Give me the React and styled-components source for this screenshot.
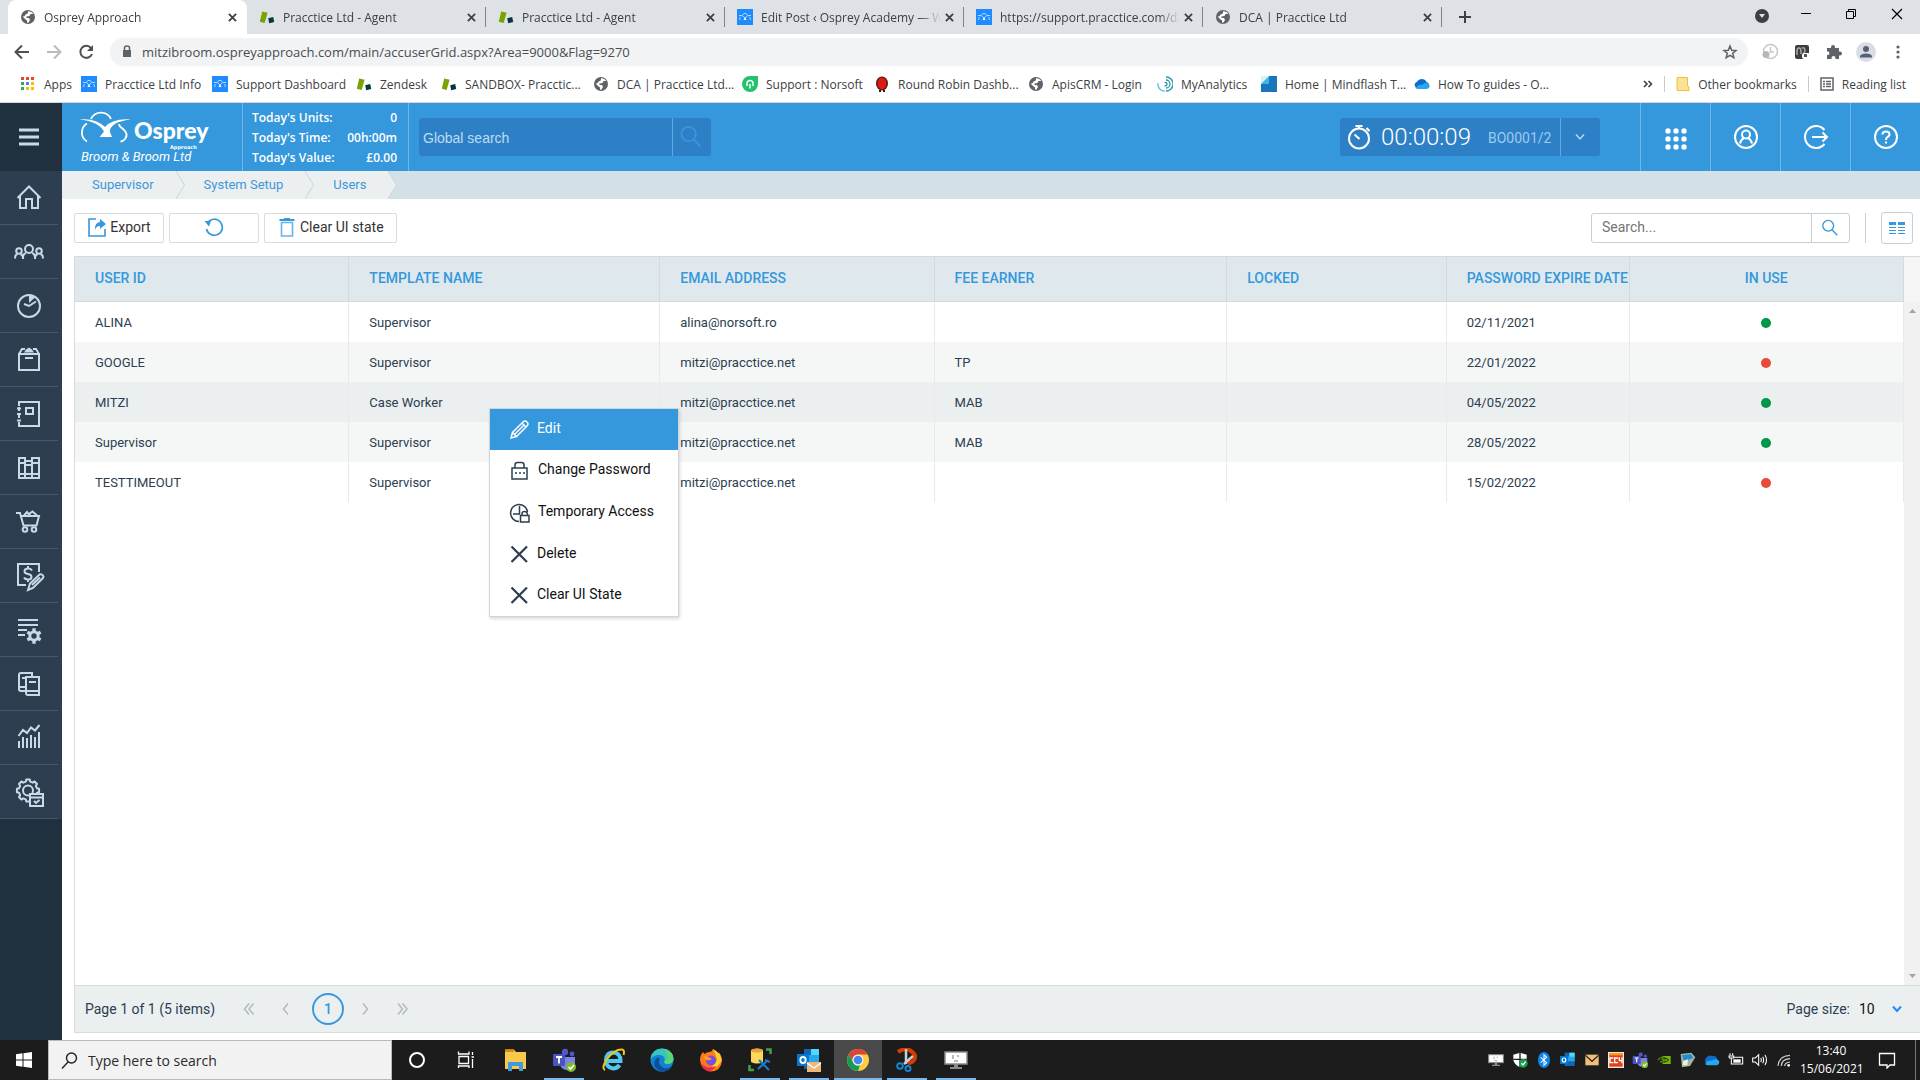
import React from "react";
import styled, { createGlobalStyle, css } from "styled-components";

const GlobalStyle = createGlobalStyle`
    * {
        box-sizing: border-box;
    }

    body {
        margin: 0;
        background-color: #fff;
        font-family: Roboto, "Liberation Sans", sans-serif;
        font-size: 14px;
        color: #2c3e50;
    }

    button,
    input,
    select {
        font: inherit;
        color: inherit;
        margin: 0;
        padding: 0;
        border: 0;
        border-radius: 0;
        background: none;
        outline: none;
    }

    button {
        cursor: pointer;
    }

    a {
        color: inherit;
        text-decoration: none;
    }

    ul,
    ol {
        list-style: none;
        margin: 0;
        padding: 0;
    }

    svg {
        display: block;
        flex: none;
    }
`;

const Page = styled.div`
    position: relative;
    display: flex;
    flex-direction: column;
    height: 100vh;
    overflow: hidden;
`;

/* ---------- browser ---------- */

const Browser = styled.header`
    flex: none;
    font-family: "Open Sans", "Noto Sans", sans-serif;
    font-size: 12px;
    color: #3c4043;
    border-bottom: 1px solid #d5d7da;
`;

const TabStrip = styled.div`
    display: flex;
    align-items: center;
    height: 34px;
    padding-left: 8px;
    background-color: #dee1e6;
`;

const Tab = styled.div`
    display: flex;
    align-items: center;
    flex: 0 1 239px;
    min-width: 0;
    height: 34px;
    padding: 6px 10px 6px 12px;
    ${props => props.$active && css`
        background-color: #fff;
        border-radius: 8px 8px 0 0;
    `}
`;

const TabTitle = styled.button`
    display: flex;
    align-items: center;
    gap: 8px;
    flex: 1;
    min-width: 0;
    text-align: left;

    span {
        flex: 1;
        overflow: hidden;
        white-space: nowrap;
        mask-image: linear-gradient(to right, #000 88%, transparent);
    }
`;

const TabClose = styled.button`
    margin-left: 4px;
`;

const TabDivider = styled.span`
    width: 1px;
    height: 20px;
    margin-left: -1px;
    background-color: ${props => (props.$hidden ? "transparent" : "#808387")};
`;

const NewTab = styled.button`
    margin-left: 15px;
`;

const WindowButtons = styled.div`
    display: flex;
    align-items: center;
    gap: 26px;
    height: 28px;
    align-self: flex-start;
    margin-left: auto;
    padding-right: 13px;
`;

const AddressRow = styled.div`
    display: flex;
    align-items: center;
    height: 36px;
    padding: 0 12px;
    gap: 12px;
`;

const AddressBar = styled.label`
    display: flex;
    align-items: center;
    flex: 1;
    height: 28px;
    margin-left: 2px;
    padding: 0 10px 0 9px;
    gap: 7px;
    border-radius: 14px;
    background-color: #f1f3f4;
    font-size: 13px;
`;

const UrlInput = styled.input`
    flex: 1;
    color: #4a4d51;
`;

const BookmarkBar = styled.nav`
    display: flex;
    align-items: center;
    height: 32px;
    padding: 0 14px 4px 20px;
`;

const Bookmark = styled.a`
    display: flex;
    align-items: center;
    flex: none;
    gap: 8px;
    width: ${props => (props.$width ? props.$width + "px" : "auto")};
    white-space: nowrap;
`;

const BookmarkEnd = styled.div`
    display: flex;
    align-items: center;
    gap: 11px;
    margin-left: auto;
`;

const BookmarkDivider = styled.span`
    width: 1px;
    height: 16px;
    background-color: #c8cacd;
`;

/* ---------- application ---------- */

const Application = styled.div`
    display: flex;
    flex: 1;
    min-height: 0;
`;

const Sidebar = styled.nav`
    flex: none;
    width: 62px;
    background-color: #21303f;
`;

const Burger = styled.button`
    display: block;
    width: 62px;
    height: 68px;
    padding-left: 13px;
`;

const SideMenu = styled.ul`
    background-color: #2d3e50;
`;

const SideItem = styled.li`
    width: 58px;
    height: 54px;
    border-bottom: 1px solid #46586a;

    button {
        display: block;
        padding: 11px 13px 10px;
    }
`;

const Main = styled.div`
    display: flex;
    flex-direction: column;
    flex: 1;
    min-width: 0;
`;

const AppHeader = styled.div`
    display: flex;
    align-items: center;
    flex: none;
    height: 68px;
    background-color: #3598dc;
    color: #fff;
`;

const Brand = styled.div`
    width: 181px;
    height: 68px;
    padding: 7px 0 0 16px;
    border-right: 1px solid #72b7e8;
`;

const BrandName = styled.div`
    padding-left: 3px;
    font-size: 13px;
    line-height: 14px;
    font-style: italic;
`;

const Today = styled.dl`
    display: grid;
    grid-template-columns: auto auto;
    justify-content: space-between;
    align-content: center;
    width: 166px;
    height: 68px;
    margin: 0;
    padding: 2px 11px 0 9px;
    border-right: 1px solid #72b7e8;
    font-family: "Open Sans", "Noto Sans", sans-serif;
    font-size: 12px;
    font-weight: 600;
    line-height: 20px;

    dd {
        margin: 0;
        text-align: right;
    }
`;

const GlobalSearch = styled.form`
    display: flex;
    width: 292px;
    height: 38px;
    margin-left: 10px;
    border-radius: 3px;
    background-color: #2d80c5;
    overflow: hidden;

    input {
        flex: 1;
        min-width: 0;
        padding: 2px 0 0 4px;
        font-family: "Liberation Sans", Arial, sans-serif;
        font-size: 14px;
    }

    input::placeholder {
        color: #bcdcf5;
        opacity: 1;
    }

    button {
        width: 39px;
        padding: 5px 6px;
        border-left: 1px solid #5eabe2;
    }
`;

const Timer = styled.div`
    display: flex;
    align-items: center;
    height: 38px;
    margin-left: auto;
    margin-right: 40px;
    padding-left: 6px;
    border-radius: 3px;
    background-color: #2d80c5;
`;

const TimerValue = styled.span`
    width: 110px;
    padding-left: 9px;
    font-size: 24px;
    font-weight: 300;
`;

const TimerMatter = styled.span`
    width: 78px;
    padding: 2px 0 0 6px;
    color: #9ccbf0;
`;

const TimerToggle = styled.button`
    width: 40px;
    height: 38px;
    padding-left: 12px;
    border-left: 1px solid #5eabe2;
`;

const HeaderButton = styled.button`
    width: 70px;
    height: 68px;
    padding-left: 21px;
    border-left: 1px solid #72b7e8;
`;

const Breadcrumb = styled.ol`
    display: flex;
    flex: none;
    height: 28px;
    background-color: #d3e0e6;
    color: #3f97d8;
    font-size: 13px;
    line-height: 28px;
`;

const Crumb = styled.li`
    display: flex;

    a {
        padding: 0 22px 0 19px;
        background-color: #ebeff0;
    }

    &:first-child a {
        padding-left: 30px;
    }

    svg {
        background-color: #ebeff0;
    }

    &:last-child svg {
        background-color: transparent;
    }
`;

const GridToolbar = styled.div`
    display: flex;
    align-items: center;
    gap: 5px;
    flex: none;
    height: 57px;
    padding: 0 7px 0 12px;
`;

const ToolButton = styled.button`
    display: flex;
    align-items: center;
    justify-content: center;
    gap: 3px;
    min-width: 90px;
    height: 30px;
    padding: 0 12px 2px;
    border: 1px solid #d9dcde;
    border-radius: 2px;
    color: #333;
`;

const GridSearch = styled.form`
    display: flex;
    width: 259px;
    height: 30px;
    margin-left: auto;
    border: 1px solid #c5d0d6;
    border-radius: 3px;

    input {
        flex: 1;
        min-width: 0;
        padding: 0 0 2px 10px;
    }

    input::placeholder {
        color: #757575;
        opacity: 1;
    }

    button {
        width: 38px;
        padding-left: 9px;
        border-left: 1px solid #c5d0d6;
    }
`;

const ColumnChooser = styled.div`
    display: flex;
    align-items: center;
    gap: 15px;
    margin-left: 10px;

    &::before {
        content: "";
        width: 1px;
        height: 30px;
        background-color: #c5d0d6;
    }

    button {
        width: 32px;
        height: 32px;
        padding-left: 7px;
        border: 1px solid #c5d0d6;
        border-radius: 3px;
    }
`;

const Grid = styled.div`
    display: flex;
    flex-direction: column;
    flex: 1;
    min-height: 0;
    margin: 0 0 7px 12px;
    border: 1px solid #d8dadb;
    border-right: 0;
`;

const GridBody = styled.div`
    display: flex;
    flex: 1;
    min-height: 0;
`;

const TableArea = styled.div`
    flex: 1;
    min-width: 0;
`;

const Table = styled.table`
    width: 100%;
    table-layout: fixed;
    border-collapse: separate;
    border-spacing: 0;
    font-size: 13px;
`;

const HeadCell = styled.th`
    height: 45px;
    padding: 0 0 2px 20px;
    border-right: 1px solid #d6dadc;
    border-bottom: 1px solid #d6dadc;
    background-color: #dfe9ed;
    color: #3598dc;
    font-size: 14px;
    font-weight: 500;
    text-align: ${props => (props.$center ? "center" : "left")};
    white-space: nowrap;
    overflow: hidden;
    ${props => props.$center && "padding-left: 0;"}
`;

const Row = styled.tr`
    background-color: ${props => (props.$selected ? "#ebeff0" : props.$striped ? "#f5f7f7" : "#fff")};
`;

const Cell = styled.td`
    height: 40px;
    padding: 0 0 0 20px;
    border-right: 1px solid #e8eaea;
    white-space: nowrap;
    ${props => props.$center && css`
        padding-left: 0;
        text-align: center;
    `}
`;

const StatusDot = styled.span`
    display: inline-block;
    width: 10px;
    height: 10px;
    border-radius: 50%;
    vertical-align: middle;
    background-color: ${props => (props.$on ? "#009846" : "#e94b3a")};
`;

const ScrollTrack = styled.div`
    display: flex;
    flex-direction: column;
    justify-content: space-between;
    width: 16px;
    padding: 6px 0;
    border-top: 45px solid #f5f5f5;
    background-color: #f1f1f1;
`;

const Pager = styled.div`
    display: flex;
    align-items: center;
    flex: none;
    height: 47px;
    padding: 0 18px 0 10px;
    border-top: 1px solid #d8dadb;
    background-color: #ebeff0;
`;

const PageList = styled.div`
    display: flex;
    align-items: center;
    gap: 7px;
    margin-left: 18px;
`;

const PageArrow = styled.button`
    padding: 4px 10px;
`;

const PageCurrent = styled.button`
    width: 32px;
    height: 32px;
    margin-left: 5px;
    border: 2px solid #3598dc;
    border-radius: 50%;
    color: #3598dc;
    font-weight: 500;
`;

const PageSize = styled.label`
    display: flex;
    align-items: center;
    gap: 9px;
    margin-left: auto;

    select {
        appearance: none;
        width: 24px;
        color: #111;
    }
`;

const ContextMenu = styled.ul`
    position: absolute;
    left: 489px;
    top: 408px;
    width: 190px;
    border: 1px solid #d3d6d8;
    background-color: #fff;
    box-shadow: 1px 2px 3px rgba(0, 0, 0, .15);
`;

const MenuButton = styled.button`
    display: flex;
    align-items: flex-start;
    width: 100%;
    gap: 7px;
    padding: 10px 19px;
    line-height: 19px;
    text-align: left;
    color: #111;
    ${props => props.$active && css`
        background-color: #3598dc;
        color: #fff;
    `}
`;

/* ---------- task bar ---------- */

const TaskBar = styled.footer`
    display: flex;
    align-items: center;
    flex: none;
    height: 40px;
    background-color: #1c1c1c;
    color: #fff;
    font-family: "Open Sans", "Noto Sans", sans-serif;
`;

const StartButton = styled.button`
    width: 48px;
    height: 40px;
    padding-left: 16px;
`;

const TaskSearch = styled.label`
    display: flex;
    align-items: center;
    gap: 10px;
    width: 344px;
    height: 40px;
    padding-left: 12px;
    border: 1px solid #b9b9b9;
    background-color: #f2f2f2;
    color: #2b2b2b;
    font-size: 14px;

    input {
        flex: 1;
    }

    input::placeholder {
        color: #2b2b2b;
        opacity: 1;
    }
`;

const TaskApps = styled.div`
    display: flex;
    gap: 1px;
    margin-left: 1px;
`;

const TaskButton = styled.button`
    display: flex;
    flex-direction: column;
    align-items: center;
    width: 48px;
    height: 40px;
    padding-top: 8px;
    justify-content: space-between;
    background-color: ${props => (props.$active ? "#4a4a4a" : "transparent")};

    &::after {
        content: "";
        width: ${props => (props.$active ? "48px" : "40px")};
        height: 2px;
        background-color: ${props => (props.$running ? "#76b9ed" : "transparent")};
    }
`;

const Tray = styled.div`
    display: flex;
    align-items: center;
    gap: 8px;
    margin-left: auto;
`;

const Clock = styled.time`
    width: 62px;
    margin-right: 8px;
    font-size: 12px;
    line-height: 18px;
    text-align: center;
    white-space: nowrap;
`;

const ShowDesktop = styled.button`
    width: 5px;
    height: 40px;
    margin-left: 11px;
    border-left: 1px solid #777;
`;

/* ---------- small pictures ---------- */

const Svg = ({ size = 16, box, w, h, stroke = "none", sw = 2, children }) => (
    <svg width={w || size} height={h || size} viewBox={box || `0 0 ${w || size} ${h || size}`} fill="none" stroke={stroke} strokeWidth={sw} aria-hidden="true">
        {children}
    </svg>
);

const gearPath = (cx, cy, outer, inner, teeth) => {
    const step = (Math.PI * 2) / teeth;
    let d = "";
    for (let i = 0; i < teeth; i++) {
        [[-.3, inner], [-.2, outer], [.2, outer], [.3, inner]].forEach(([part, r], n) => {
            const a = (i + part) * step;
            d += (i === 0 && n === 0 ? "M" : "L") + (cx + r * Math.sin(a)).toFixed(2) + " " + (cy - r * Math.cos(a)).toFixed(2);
        });
    }
    return d + "Z";
};

const Globe = () => (
    <Svg>
        <circle cx="8" cy="8" r="7" fill="#5f6368" />
        <path d="M8 2.2 C10 2 12 3 13.3 5 L10.5 5 L9.5 7 L6.5 7.5 L6.5 9 L9 9 L10 11 L8.3 13.8 L7 13.6 L7 11.5 L5 10 L2.4 7.2 C4 8 5 7 5.5 5.5 L7.8 4.5 Z" fill="#fff" />
    </Svg>
);

const ZenIcon = () => (
    <Svg>
        <path d="M3.2 2.5 L8.6 3.8 L5.6 14 L.8 12.8 Z" fill="#78a300" />
        <path d="M9.2 9.2 L14.2 8 L15.2 13 L10.2 14.2 Z" fill="#03363d" />
    </Svg>
);

const BirdIcon = () => (
    <Svg>
        <rect width="16" height="16" fill="#1e8bff" />
        <path d="M2 6.5 Q6 5.5 8 9 Q10 5.5 14 6.5 M5.5 5.5 Q8 3 10.5 5.5 M3.5 8 Q2 9.5 3 11 M12.5 8 Q14 9.5 13 11" stroke="#d9ecff" strokeWidth=".8" />
        <path d="M6.5 11 L8 8 L9.5 11 Z" fill="#fff" />
    </Svg>
);

const AppsIcon = () => (
    <Svg>
        {["#ea4335", "#ea4335", "#ea4335", "#34a853", "#4285f4", "#fbbc04", "#34a853", "#fbbc04", "#fbbc04"].map((color, i) => (
            <rect key={i} x={1 + (i % 3) * 5} y={1 + Math.floor(i / 3) * 5} width="3" height="3" fill={color} />
        ))}
    </Svg>
);

const NorsoftIcon = () => (
    <Svg>
        <path d="M8 0 H16 V8 A8 8 0 1 1 8 0 Z" fill="#25c16f" />
        <path d="M5 10 V7.5 A3 3 0 0 1 11 7.5 V10 M8 12.5 V8" stroke="#fff" strokeWidth="1.5" />
    </Svg>
);

const RobinIcon = () => (
    <Svg>
        <ellipse cx="8" cy="7.5" rx="6" ry="7" fill="#5a1a12" />
        <ellipse cx="8" cy="7.5" rx="4.5" ry="6" fill="#d81e10" />
        <path d="M5 14 H7 V16 H5 Z M9 14 H11 V16 H9 Z" fill="#222" />
    </Svg>
);

const AnalyticsIcon = () => (
    <Svg stroke="#2b95a8" sw={1.3}>
        <path d="M9 1 A7 7 0 0 1 9 15 M9 4 A4 4 0 0 1 9 12" />
        <path d="M7.5 6.5 A1.8 1.8 0 1 1 7.5 9.8" />
        <path d="M1 7 A7 7 0 0 0 8 15.2" stroke="#56c2d6" />
    </Svg>
);

const MindflashIcon = () => (
    <Svg>
        <rect width="16" height="16" fill="#1b75bc" />
        <path d="M0 0 H8 V8 H0 Z" fill="#3db7e8" />
        <path d="M0 0 H8 L0 8 Z" fill="#d7f0fb" />
    </Svg>
);

const CloudIcon = () => (
    <Svg>
        <path d="M4 12.5 A4 3.6 0 0 1 3 5.7 A5.3 5.3 0 0 1 12.5 6 A3.4 3.4 0 0 1 13 12.5 Z" fill="#0f6cc9" />
        <path d="M2 12 Q4 8 8 9 Q11 5.5 14 7.5 Q17 9.5 14.5 12.3 Q13.5 13 12 13 H4 Q2.5 13 2 12 Z" fill="#28a8ea" />
    </Svg>
);

const Cross = ({ size = 9, color = "#3c4043", sw = 2 }) => (
    <Svg size={size} box="0 0 10 10" stroke={color} sw={sw}>
        <path d="M1 1 L9 9 M9 1 L1 9" />
    </Svg>
);

const Chevron = ({ color, double, left, height = 14 }) => (
    <Svg w={double ? 12 : 8} h={height} box={double ? "0 0 12 14" : "0 0 8 14"} stroke={color} sw={1.5}>
        <path d={left ? "M6 1.5 L1.5 7 L6 12.5" : "M2 1.5 L6.5 7 L2 12.5"} />
        {double && <path d={left ? "M10.5 1.5 L6 7 L10.5 12.5" : "M6.5 1.5 L11 7 L6.5 12.5"} />}
    </Svg>
);

const DownChevron = ({ color, w = 10, sw = 2 }) => (
    <Svg w={w} h={8} box="0 0 10 8" stroke={color} sw={sw}>
        <path d="M1 1.5 L5 6 L9 1.5" />
    </Svg>
);

const Magnifier = ({ size, color, sw = 1.5 }) => (
    <Svg size={size} box="0 0 20 20" stroke={color} sw={sw}>
        <circle cx="8" cy="7.5" r="6" />
        <path d="M12.3 12 L18 18" />
    </Svg>
);

const OspreyLogo = () => (
    <svg width="140" height="40" viewBox="0 0 140 40" role="img" aria-label="Osprey Approach">
        <g fill="none" stroke="#fff" strokeWidth="1.8">
            <path d="M13 9 A11 11 0 0 1 33 9" />
            <path d="M9 13.5 A10.5 10.5 0 0 0 9 31.5" />
            <path d="M41 14 Q41 16.5 45 19 Q51 24 47 29 Q45 31.5 42.5 31.5" />
        </g>
        <path d="M1 9.5 Q17 7.5 27 17 Q35 8 53 9.5 Q41 11 37 14 Q31 18 32 22 L34 27 H21.5 L26 21.5 Q20 11 1 9.5 Z" fill="#fff" />
        <text x="56" y="29" fill="#fff" fontFamily="Lato, sans-serif" fontWeight="900" fontSize="23">Osprey</text>
        <text x="92" y="39" fill="#fff" fontFamily="DejaVu Sans, sans-serif" fontWeight="700" fontSize="5">Approach</text>
    </svg>
);

const side = "#c9d9e6";

const sideIcons = [
    { name: "Home", art: <path d="M4.5 16 L16 4.5 L27.5 16 M7 14 V26 H13 V17 H19 V26 H25 V14" /> },
    { name: "Clients", art: (
        <>
            <circle cx="16" cy="13" r="4" />
            <circle cx="6" cy="15" r="2.8" />
            <circle cx="26" cy="15" r="2.8" />
            <path d="M10 23 V21 Q10 18 13 17 M19 17 Q22 18 22 21 V23 M2 22.5 Q2 18.5 4.5 18 M7.5 18 Q10 19 10 22 M30 22.5 Q30 18.5 27.5 18 M24.5 18 Q22 19 22 22" />
        </>
    ) },
    { name: "Time", art: (
        <>
            <circle cx="16" cy="16" r="11" />
            <path d="M16 5 Q20 5 22.5 7 L16 13 Z" fill={side} stroke="none" />
            <path d="M11 14 L16 16 L23 11.5" />
        </>
    ) },
    { name: "Archive", art: (
        <>
            <path d="M6 10 H26 V26 H6 Z M6 10 L9 5 H12 M20 5 H23 L26 10 M12 14 H20" />
            <path d="M11 8.5 L13 5.5 L16 3.5 L19 5.5 L21 8.5 Z" fill={side} stroke="none" />
        </>
    ) },
    { name: "Contacts", art: <path d="M6 8 V4 H26 V28 H6 V24 M6 9 V13 M6 16 V20 M4 10.5 H8 M4 16 H8 M4 22.5 H8 M13 10 H20 V16 H13 Z" /> },
    { name: "Ledgers", art: <path d="M6 6 H12 V26 H6 Z M12 9 H19 V26 H12 M19 6 H26 V26 H19 Z M7 11 H12 M7 22 H12 M13 13 H18 M13 22 H18 M20 11 H26 M20 22 H26" /> },
    { name: "Purchases", art: (
        <>
            <path d="M3 7 H7 L10.5 19.5 H23.5 L26 10 H8.5" />
            <path d="M11 9.5 L14 6 L17 9.5 M16 8 L19.500 5.500 L24 9.500" />
            <circle cx="12" cy="23.5" r="2.3" />
            <circle cx="21" cy="23.5" r="2.3" />
        </>
    ) },
    { name: "Billing", art: (
        <>
            <path d="M13 25 H5 V4 H26 V12" />
            <path d="M19 10.5 Q18 8.5 15 8.5 Q11.5 8.5 11.5 11.3 Q11.5 13.5 15 14 Q18.5 14.5 18.5 17 Q18.5 19.5 15 19.5 Q12 19.5 11 17.5 M15 6 V9 M15 19 V22" />
            <path d="M15 30 L17 23.5 L26.5 14.5 Q28.5 13.5 30 15.5 Q31 17 29.5 18.5 L20 28 Z M19 25 L27 17.5" />
        </>
    ) },
    { name: "Tasks", art: (
        <>
            <path d="M5 6 H25 M5 11 H25 M5 16 H14 M5 21 H12" />
            <path d={gearPath(21, 22, 7.8, 5.6, 6)} fill={side} stroke="none" />
            <circle cx="21" cy="22" r="2.7" fill="#2d3e50" stroke="none" />
        </>
    ) },
    { name: "Documents", art: <path d="M12 23 H8 Q6 23 6 21 V7 Q6 5 8 5 H19 V9 M6 19 H12 M9 10 H13 M13 9 H26 V27 H15 Q13 27 13 25 Z M13 23 H26 M16 14 H23" /> },
    { name: "Reports", art: <path d="M6 19 V26 M10 15 V26 M14 16 V26 M18 13 V26 M22 15 V26 M26 10 V26 M5.5 14 L10 8 L14 11 L18 5.5 L22 8.5 L26.5 3" /> },
    { name: "System", art: (
        <>
            <path d={gearPath(15, 14.5, 11.2, 9.2, 8)} strokeLinejoin="round" />
            <circle cx="15" cy="14.5" r="5" />
            <path d="M17 18 H30 V30 H17 Z" fill="#2d3e50" />
            <path d="M17 21.5 H30 M21 25 L23 27 L26.5 24" />
        </>
    ) }
];

/* ---------- data ---------- */

const tabs = [
    { title: "Osprey Approach", icon: <Globe /> },
    { title: "Pracctice Ltd - Agent", icon: <ZenIcon /> },
    { title: "Pracctice Ltd - Agent", icon: <ZenIcon /> },
    { title: "Edit Post ‹ Osprey Academy — W", icon: <BirdIcon /> },
    { title: "https://support.pracctice.com/da", icon: <BirdIcon /> },
    { title: "DCA | Pracctice Ltd", icon: <Globe /> }
];

const bookmarks = [
    { title: "Apps", icon: <AppsIcon />, width: 61 },
    { title: "Pracctice Ltd Info", icon: <BirdIcon />, width: 131 },
    { title: "Support Dashboard", icon: <BirdIcon />, width: 144 },
    { title: "Zendesk", icon: <ZenIcon />, width: 85 },
    { title: "SANDBOX- Pracctic...", icon: <ZenIcon />, width: 152 },
    { title: "DCA | Pracctice Ltd...", icon: <Globe />, width: 149 },
    { title: "Support : Norsoft", icon: <NorsoftIcon />, width: 132 },
    { title: "Round Robin Dashb...", icon: <RobinIcon />, width: 154 },
    { title: "ApisCRM - Login", icon: <Globe />, width: 129 },
    { title: "MyAnalytics", icon: <AnalyticsIcon />, width: 104 },
    { title: "Home | Mindflash T...", icon: <MindflashIcon />, width: 153 },
    { title: "How To guides - O...", icon: <CloudIcon />, width: 140 }
];

const columns = [
    { title: "USER ID", width: "15%" },
    { title: "TEMPLATE NAME", width: "17%" },
    { title: "EMAIL ADDRESS", width: "15%" },
    { title: "FEE EARNER", width: "16%" },
    { title: "LOCKED", width: "12%" },
    { title: "PASSWORD EXPIRE DATE", width: "10%" },
    { title: "IN USE", width: "15%", center: true }
];

const users = [
    { id: "ALINA", template: "Supervisor", email: "alina@norsoft.ro", earner: "", expires: "02/11/2021", inUse: true },
    { id: "GOOGLE", template: "Supervisor", email: "mitzi@pracctice.net", earner: "TP", expires: "22/01/2022", inUse: false },
    { id: "MITZI", template: "Case Worker", email: "mitzi@pracctice.net", earner: "MAB", expires: "04/05/2022", inUse: true, selected: true },
    { id: "Supervisor", template: "Supervisor", email: "mitzi@pracctice.net", earner: "MAB", expires: "28/05/2022", inUse: true },
    { id: "TESTTIMEOUT", template: "Supervisor", email: "mitzi@pracctice.net", earner: "", expires: "15/02/2022", inUse: false }
];

const menuItems = [
    { title: "Edit", icon: (
        <Svg size={21} stroke="#fff" sw={1.5}>
            <path d="M2 19 L3.5 13.5 L14 3 Q16 1 18 3 Q20 5 18 7 L7.5 17.5 Z M3.5 13.5 L7.5 17.5 M13 4 L17 8 M6 15 L15 6" />
        </Svg>
    ) },
    { title: "Change Password", icon: (
        <Svg size={22} stroke="#2c3e50" sw={1.5}>
            <path d="M3 8 H18 V19 H3 Z M6 8 V5 Q6 2.5 8.5 2.5 H12.5 Q15 2.5 15 5 V8 M6 13 H8 M10 13 H12 M14 13 H16" />
        </Svg>
    ) },
    { title: "Temporary Access", icon: (
        <Svg size={22} stroke="#2c3e50" sw={1.5}>
            <path d="M10 19.5 A8.5 8.5 0 1 1 18.5 10 M10.5 4 V12 H4" />
            <path d="M11.5 13.5 H20 V20 H11.5 Z M13 13 V11.5 Q13 9.5 15.5 9.5 Q18.5 9.5 18.5 13" />
        </Svg>
    ) },
    { title: "Delete", icon: <Svg size={21} stroke="#2c3e50" sw={2.2}><path d="M2.5 2.5 L18 18 M18 2.5 L2.5 18" /></Svg> },
    { title: "Clear UI State", icon: <Svg size={21} stroke="#2c3e50" sw={2.2}><path d="M2.5 2.5 L18 18 M18 2.5 L2.5 18" /></Svg> }
];

const teams = (
    <>
        <circle cx="13" cy="4" r="3.2" fill="#5059c9" />
        <circle cx="20" cy="6" r="2.4" fill="#5059c9" />
        <path d="M8 9 H23 V16 Q23 21 16 22 Q9 22 8 16 Z" fill="#7b83eb" />
        <rect x="1" y="6" width="12" height="12" rx="1" fill="#4b53bc" />
        <path d="M4 9 H10 M7 9 V15.5" stroke="#fff" strokeWidth="1.8" />
        <circle cx="19" cy="19" r="5" fill="#7fba2c" />
        <path d="M16.5 19 L18.5 21 L22 17" stroke="#fff" strokeWidth="1.6" />
    </>
);

const outlook = (
    <>
        <rect x="7" y="1" width="15" height="20" fill="#1066b5" />
        <rect x="14" y="1" width="8" height="7" fill="#50d9ff" />
        <rect x="9" y="7" width="13" height="7" fill="#28a8ea" />
        <rect x="0" y="6" width="12" height="12" fill="#0078d4" />
        <ellipse cx="6" cy="12" rx="2.7" ry="3" stroke="#fff" strokeWidth="1.8" />
    </>
);

const monitor = (
    <>
        <rect x="1" y="4" width="22" height="12" fill="#fff" stroke="#8a8a8a" strokeWidth="1.5" />
        <path d="M9 7 V11 M14 7 V9 M10 13 H14" stroke="#777" strokeWidth="1" />
        <path d="M10 16 H14 V19 H18 V21 H6 V19 H10 Z" fill="#8a8a8a" />
    </>
);

const taskApps = [
    { name: "Cortana", art: <circle cx="12" cy="12" r="7" stroke="#fff" strokeWidth="2" /> },
    { name: "Task View", art: <path d="M5 8.5 H14.5 V15.5 H5 Z M4.5 3.5 V6 H15 V3.5 M4.5 20 V18 H15 V20 M18.5 4 V7 M18.5 11 V20 M17.5 9 H20" stroke="#fff" strokeWidth="1.3" /> },
    { name: "File Explorer", art: (
        <>
            <path d="M2 1.5 H11 L13 4 H23 V21 H2 Z" fill="#f8c94c" />
            <path d="M2 1.5 H11 V4 H2 Z" fill="#d9900f" />
            <path d="M5 23 V14 H20 V23 H16 V18 H9 V23 Z" fill="#3d9be0" />
        </>
    ) },
    { name: "Teams", art: teams, running: true },
    { name: "Internet Explorer", art: (
        <>
            <path d="M18.5 17 Q16 20.5 12 20.5 Q5 19.5 5 12 Q5.5 4.5 12.5 4.5 Q19.5 5 19.5 13 H7" stroke="#4fc8f2" strokeWidth="4" />
            <path d="M4 22 Q0 20 6 11 Q14 1 21 1.5 Q24 2 22.5 7" stroke="#f5c518" strokeWidth="2" />
        </>
    ) },
    { name: "Edge", art: (
        <>
            <circle cx="12" cy="12" r="11.5" fill="#1382d0" />
            <path d="M.5 11 Q1.5 1 12 .5 Q23 1 23.5 11 Q23 16 17 16 Q13 15.5 14.5 13 Q16 8 10 7 Q4 6.5 .5 11 Z" fill="#38c5c0" />
            <path d="M14 1 Q23 3 23.5 11 Q23 16 17 16 Q14 15.5 14.5 13 Q21 12 14 1 Z" fill="#5ad573" />
            <path d="M10 10 Q7 17 14 20 Q18 21 21.5 18 Q17 25 10 23 Q3 20 4.5 13 Q6 9 10 10 Z" fill="#0c4f9e" />
        </>
    ) },
    { name: "Firefox", art: (
        <>
            <path d="M1 12 Q1 7 4 4 L5.5 6 Q8 3.5 11 4 Q13 4 14 1 Q17 3 18 6 L20 4.5 Q23 8 23 13 Q22 23 12 23.5 Q2 23 1 12 Z" fill="#ff7a1a" />
            <path d="M14 1 Q22 5 22.5 12 Q20 20 13 19 L18 12 Q17 6 14 1 Z" fill="#ffcf33" />
            <path d="M2 15 Q8 22 17 18 Q13 24 9 23 Q3 21 2 15 Z" fill="#f5274e" />
            <circle cx="12" cy="12.5" r="5" fill="#7a4fe0" />
            <path d="M5 8 Q9 8 13 11 Q10 13 7.5 12 Q5 11 5 8 Z" fill="#ff9d2e" />
        </>
    ) },
    { name: "SQL Studio", running: true, art: (
        <>
            <path d="M3 2 Q9 -1 15 2 V14 Q9 17 3 14 Z" fill="#fcd95b" />
            <ellipse cx="9" cy="2.5" rx="6" ry="2" fill="#e8a33d" />
            <path d="M18 1.5 H22.5 V6 M1.5 17 V22 H6" stroke="#45a04a" strokeWidth="2.5" />
            <path d="M10 21 L20 12 M11 12 L21 22 M17 12 L22 14" stroke="#1d78c9" strokeWidth="2.2" />
        </>
    ) },
    { name: "Outlook", running: true, art: (
        <>
            {outlook}
            <rect x="10" y="14" width="14" height="10" fill="#f0b878" />
            <path d="M10 15 L17 20 L24 15" stroke="#fff" strokeWidth="1.3" />
        </>
    ) },
    { name: "Chrome", running: true, active: true, art: (
        <>
            <circle cx="12" cy="12" r="11" fill="#ffcd40" />
            <path d="M2.5 6.5 A11 11 0 0 1 21.5 6.5 H12 A5.5 5.5 0 0 0 7.3 14.8 Z" fill="#db4437" />
            <path d="M2.5 6.5 L7.3 14.8 A5.5 5.5 0 0 0 14 17 L12 23 A11 11 0 0 1 2.5 6.5 Z" fill="#0f9d58" />
            <circle cx="12" cy="12" r="5.5" fill="#f1f1f1" />
            <circle cx="12" cy="12" r="4.3" fill="#4285f4" />
        </>
    ) },
    { name: "Snipping Tool", running: true, art: (
        <>
            <path d="M3 4 Q10 -1 16 3 Q22 7 19 12 Q17 15 13 15" stroke="#d83b01" strokeWidth="4" />
            <path d="M11 1 V16 M18 8 L9 16" stroke="#c9ced2" strokeWidth="2.5" />
            <circle cx="5" cy="18" r="2.8" stroke="#1583d0" strokeWidth="2" />
            <circle cx="13" cy="20.5" r="2.5" stroke="#1583d0" strokeWidth="2" />
        </>
    ) },
    { name: "Remote Desktop", art: monitor, running: true }
];

const trayIcons = [
    { name: "Remote", art: monitor },
    { name: "Security", art: (
        <>
            <path d="M12 1 L22 4 V12 Q20 20 12 23 Q4 20 2 12 V4 Z" fill="#fff" />
            <path d="M12 1 V23 M2 11 H22" stroke="#1c1c1c" strokeWidth="2" />
            <circle cx="17" cy="17" r="6.5" fill="#1b9e4b" />
            <path d="M14 17 L16.5 19.5 L20.5 14.5" stroke="#fff" strokeWidth="2" />
        </>
    ) },
    { name: "Bluetooth", art: (
        <>
            <ellipse cx="12" cy="12" rx="9" ry="12" fill="#0a84f0" />
            <path d="M7 8 L16 16 L12 20 V4 L16 8 L7 16" stroke="#fff" strokeWidth="1.6" />
        </>
    ) },
    { name: "Outlook", art: outlook },
    { name: "Mail", art: (
        <>
            <rect x="2" y="4" width="20" height="16" fill="#efc07c" />
            <path d="M2 5 L12 14 L22 5" stroke="#3b2a14" strokeWidth="2" />
        </>
    ) },
    { name: "CC4", art: (
        <>
            <rect width="24" height="24" fill="#f4e8d8" />
            <rect x="2" y="2" width="20" height="20" fill="#e2401b" />
            <path d="M2 3.5 H22" stroke="#f6a21c" strokeWidth="3" />
            <path d="M8 9 H3 V16 H8 M15 9 H10 V16 H15 M17 8 V13 H22 M21 8 V17" stroke="#fff" strokeWidth="2" />
        </>
    ) },
    { name: "Teams", art: teams },
    { name: "Nvidia", art: (
        <>
            <rect x="10" y="6" width="12" height="12" fill="#76b900" />
            <path d="M3 12 Q8 5 15 10 Q12 17 6 14 M8 12 Q11 9 13 12" stroke="#4f8a10" strokeWidth="2" />
            <path d="M11 9 Q17 9 19 12 Q16 16 11 15" stroke="#1c1c1c" strokeWidth="1.5" />
        </>
    ) },
    { name: "Display", art: (
        <>
            <path d="M1 3 L17 1 L23 8 L15 21 L3 23 Z" fill="#9db8a2" />
            <path d="M3 5 L16 3 L20 9 L6 14 Z" fill="#2389d6" />
            <path d="M5 13 L12 11 L11 20 L4 20 Z" fill="#f6efcc" />
        </>
    ) },
    { name: "OneDrive", art: (
        <>
            <path d="M4 18 Q-1 14 3 9 Q7 4 12 6 Q19 5 20 11 L22 17 Z" fill="#0f6cc9" />
            <path d="M2 18 Q5 12 11 13 Q16 9 21 12 Q25 15 21 19 Q20 20 18 20 H5 Q3 20 2 18 Z" fill="#28a8ea" />
        </>
    ) },
    { name: "Battery", art: (
        <>
            <path d="M8 8 H22 V18 H5 V12 M3 2 V5 M7 2 V5 M1.5 6 H8.5 V9 H2 Z M5 9 V12" stroke="#fff" strokeWidth="1.6" />
            <path d="M8 11 H19 V16 H8 Z" fill="#fff" />
        </>
    ) },
    { name: "Volume", art: <path d="M1 9 H5 L10 4 V20 L5 15 H1 Z M13 9 Q15 12 13 15 M16 7 Q19 12 16 17 M19.5 4.5 Q24 12 19.5 19.5" stroke="#fff" strokeWidth="1.6" /> },
    { name: "Wi-Fi", art: (
        <>
            <path d="M3 21 Q4 6 21 5 M8 21 Q8 11 21 10 M13 21 Q13 16 21 15" stroke="#cfcfcf" strokeWidth="1.7" />
            <circle cx="19" cy="20" r="2" fill="#fff" />
        </>
    ) }
];

const BrowserChrome = () => (
    <Browser>
        <TabStrip>
            {tabs.map((tab, i) => (
                <React.Fragment key={i}>
                    <Tab $active={i === 0}>
                        <TabTitle>{tab.icon}<span>{tab.title}</span></TabTitle>
                        <TabClose aria-label="Close tab"><Cross /></TabClose>
                    </Tab>
                    <TabDivider $hidden={i === 0} />
                </React.Fragment>
            ))}
            <NewTab aria-label="New tab">
                <Svg size={16} stroke="#3c4043"><path d="M8 2 V14 M2 8 H14" /></Svg>
            </NewTab>
            <WindowButtons>
                <button aria-label="Search tabs">
                    <Svg size={18}>
                        <circle cx="9" cy="11" r="7" fill="#3c4043" />
                        <path d="M6 9 H12 L9 13 Z" fill="#dee1e6" />
                    </Svg>
                </button>
                <button aria-label="Minimise"><Svg size={18} stroke="#000" sw={1}><path d="M4 8.5 H14" /></Svg></button>
                <button aria-label="Restore"><Svg size={20} stroke="#000" sw={1}><path d="M5.5 7.5 H12.5 V14.5 H5.5 Z M7.5 7 V5.5 H14.5 V12.5 H13" /></Svg></button>
                <button aria-label="Close"><Svg size={20} stroke="#000" sw={1.2}><path d="M5 5 L15 15 M15 5 L5 15" /></Svg></button>
            </WindowButtons>
        </TabStrip>
        <AddressRow>
            <button aria-label="Back"><Svg size={20} stroke="#4d5156"><path d="M17 10 H4 M10 3.5 L3.5 10 L10 16.5" /></Svg></button>
            <button aria-label="Forward"><Svg size={20} stroke="#b9bbbe"><path d="M3 10 H16 M10 3.5 L16.5 10 L10 16.5" /></Svg></button>
            <button aria-label="Reload">
                <Svg size={20} stroke="#4d5156">
                    <path d="M15 6 A6 6 0 1 0 16 12" />
                    <path d="M17 3 V9 H11 Z" fill="#4d5156" stroke="none" />
                </Svg>
            </button>
            <AddressBar>
                <Svg size={16}>
                    <path d="M4 6 H12 V13 H4 Z" fill="#5f6368" />
                    <path d="M5.5 6 V4 Q5.5 2 8 2 Q10.5 2 10.5 4 V6" stroke="#5f6368" strokeWidth="1.5" />
                </Svg>
                <UrlInput aria-label="Address" defaultValue="mitzibroom.ospreyapproach.com/main/accuserGrid.aspx?Area=9000&Flag=9270" />
                <Svg size={16} stroke="#5f6368" sw={1.5}><path d="M8 2 L9.7 6.2 L14 6.5 L10.7 9.3 L11.8 13.6 L8 11.3 L4.2 13.6 L5.3 9.3 L2 6.5 L6.3 6.2 Z" /></Svg>
            </AddressBar>
            <button aria-label="Extension">
                <Svg size={20} stroke="#c6c7c9" sw={1.5}>
                    <circle cx="10.5" cy="9.5" r="7" />
                    <path d="M10.5 5 V10 H14" />
                    <circle cx="6" cy="12.5" r="3.5" fill="#b5b7b9" stroke="none" />
                </Svg>
            </button>
            <button aria-label="Screen recorder">
                <Svg size={20}>
                    <rect x="3" y="3" width="14" height="14" rx="2" fill="#3e3e3e" />
                    <path d="M5 13 V9 Q5 6 7 6 Q9 6 9 9 V12 M10 6 Q13 5 13 9 L12 11" stroke="#aaa" strokeWidth="1.5" />
                    <rect x="10" y="11" width="8" height="6" rx="2" fill="#fff" />
                    <rect x="12" y="12" width="3" height="3" fill="#555" />
                </Svg>
            </button>
            <button aria-label="Extensions">
                <Svg size={20}><path d="M3 6 H7 V5 A2 2 0 0 1 11 5 V6 H15 V9.5 H16 A2 2 0 0 1 16 13.5 H15 V17 H11.5 V16 A2 2 0 0 0 7.5 16 V17 H3 V13 H4 A1.8 1.8 0 0 0 4 9.5 H3 Z" fill="#5f6368" /></Svg>
            </button>
            <button aria-label="Profile">
                <Svg size={20} box="1 1 20 20">
                    <circle cx="11" cy="11" r="10" fill="#dadde4" />
                    <circle cx="11" cy="8" r="3" fill="#566078" />
                    <path d="M5 16.5 V15 Q6 12.5 11 12.5 Q16 12.5 17 15 V16.5 Z" fill="#566078" />
                </Svg>
            </button>
            <button aria-label="Browser menu">
                <Svg size={20}>
                    <circle cx="10" cy="5" r="1.6" fill="#5f6368" />
                    <circle cx="10" cy="10" r="1.6" fill="#5f6368" />
                    <circle cx="10" cy="15" r="1.6" fill="#5f6368" />
                </Svg>
            </button>
        </AddressRow>
        <BookmarkBar>
            {bookmarks.map(item => (
                <Bookmark key={item.title} href="#" $width={item.width}>{item.icon}{item.title}</Bookmark>
            ))}
            <BookmarkEnd>
                <Svg w={10} h={8} stroke="#3c4043" sw={1.6}><path d="M1 1 L4 4 L1 7 M5.5 1 L8.5 4 L5.5 7" /></Svg>
                <BookmarkDivider />
                <Bookmark href="#">
                    <Svg size={14}><path d="M1 .5 H11.5 V9 L13 10 V13.5 H1 Z" fill="#fde293" stroke="#e9c23d" strokeWidth="1" /></Svg>
                    Other bookmarks
                </Bookmark>
                <BookmarkDivider />
                <Bookmark href="#">
                    <Svg size={14} stroke="#5f6368" sw={1.5}><path d="M1 1 H13 V13 H1 Z M3 4.5 H5 M6 4.5 H11 M3 7 H5 M6 7 H11 M3 9.5 H5 M6 9.5 H11" /></Svg>
                    Reading list
                </Bookmark>
            </BookmarkEnd>
        </BookmarkBar>
    </Browser>
);

const Header = () => (
    <AppHeader>
        <Brand>
            <OspreyLogo />
            <BrandName>Broom &amp; Broom Ltd</BrandName>
        </Brand>
        <Today>
            <dt>Today's Units:</dt><dd>0</dd>
            <dt>Today's Time:</dt><dd>00h:00m</dd>
            <dt>Today's Value:</dt><dd>£0.00</dd>
        </Today>
        <GlobalSearch>
            <input type="text" aria-label="Global search" placeholder="Global search" />
            <button type="button" aria-label="Search"><Magnifier size={24} color="#3b95da" /></button>
        </GlobalSearch>
        <Timer>
            <Svg w={26} h={28} stroke="#fff" sw={2}>
                <circle cx="13" cy="15.5" r="10" />
                <path d="M9.5 3 H16.5 M13 3 V5.5 M20.5 5 L23.5 8 M8.5 11.5 L13.5 16" />
            </Svg>
            <TimerValue>00:00:09</TimerValue>
            <TimerMatter>BO0001/2</TimerMatter>
            <TimerToggle aria-label="Timer options"><DownChevron color="#b8dbf5" sw={1.3} w={14} /></TimerToggle>
        </Timer>
        <HeaderButton aria-label="Applications">
            <Svg size={28}>
                {[0, 1, 2, 3, 4, 5, 6, 7, 8].map(i => (
                    <circle key={i} cx={6 + (i % 3) * 8} cy={8 + Math.floor(i / 3) * 8} r="2.7" fill="#fff" />
                ))}
            </Svg>
        </HeaderButton>
        <HeaderButton aria-label="Account">
            <Svg size={28} stroke="#fff">
                <circle cx="14" cy="14" r="11" />
                <circle cx="14" cy="11.5" r="4" />
                <path d="M8 20.5 Q9 16.5 12 15 M16 15 Q19 16.5 20 20.5" />
            </Svg>
        </HeaderButton>
        <HeaderButton aria-label="Log out">
            <Svg size={28} stroke="#fff">
                <path d="M22.5 7 A11 11 0 1 0 22.5 21 M10 14 H25 M20.5 9.5 L25 14 L20.5 18.5" />
            </Svg>
        </HeaderButton>
        <HeaderButton aria-label="Help">
            <Svg size={28} stroke="#fff">
                <circle cx="14" cy="14" r="11" />
                <path d="M10.5 11.5 Q10.5 8.5 14 8.5 Q17.5 8.5 17.5 11.5 Q17.5 13 15.5 14 Q14 15 14 17 M14 18.5 V20.5" />
            </Svg>
        </HeaderButton>
    </AppHeader>
);

const UserTable = () => (
    <Table>
        <thead>
            <tr>
                {columns.map(col => (
                    <HeadCell key={col.title} scope="col" width={col.width} $center={col.center}>{col.title}</HeadCell>
                ))}
            </tr>
        </thead>
        <tbody>
            {users.map((user, i) => (
                <Row key={user.id} $striped={i % 2 === 1} $selected={user.selected}>
                    <Cell>{user.id}</Cell>
                    <Cell>{user.template}</Cell>
                    <Cell>{user.email}</Cell>
                    <Cell>{user.earner}</Cell>
                    <Cell />
                    <Cell>{user.expires}</Cell>
                    <Cell $center><StatusDot $on={user.inUse} /></Cell>
                </Row>
            ))}
        </tbody>
    </Table>
);

const GridPager = () => (
    <Pager>
        <span>Page 1 of 1 (5 items)</span>
        <PageList>
            <PageArrow aria-label="First page"><Chevron double left color="#b4b9bc" /></PageArrow>
            <PageArrow aria-label="Previous page"><Chevron left color="#b4b9bc" /></PageArrow>
            <PageCurrent>1</PageCurrent>
            <PageArrow aria-label="Next page"><Chevron color="#b4b9bc" /></PageArrow>
            <PageArrow aria-label="Last page"><Chevron double color="#b4b9bc" /></PageArrow>
        </PageList>
        <PageSize>
            Page size:
            <select defaultValue="10">
                <option>10</option>
                <option>20</option>
            </select>
            <DownChevron color="#1e8bff" />
        </PageSize>
    </Pager>
);

const WindowsBar = () => (
    <TaskBar>
        <StartButton aria-label="Start">
            <Svg size={16}><path d="M0 2.2 L6.5 1.3 V7.5 H0 Z M7.5 1.2 L16 0 V7.5 H7.5 Z M0 8.5 H6.5 V14.7 L0 13.8 Z M7.5 8.5 H16 V16 L7.5 14.8 Z" fill="#fff" /></Svg>
        </StartButton>
        <TaskSearch>
            <Svg size={17} stroke="#222" sw={1.4}>
                <circle cx="10.5" cy="6" r="5" />
                <path d="M7 10 L1 16.5" />
            </Svg>
            <input type="text" aria-label="Search Windows" placeholder="Type here to search" />
        </TaskSearch>
        <TaskApps>
            {taskApps.map(app => (
                <TaskButton key={app.name} aria-label={app.name} $running={app.running} $active={app.active}>
                    <Svg size={24}>{app.art}</Svg>
                </TaskButton>
            ))}
        </TaskApps>
        <Tray>
            {trayIcons.map(icon => (
                <button key={icon.name} aria-label={icon.name}><Svg size={16} box="0 0 24 24">{icon.art}</Svg></button>
            ))}
            <Clock>13:40<br />15/06/2021</Clock>
            <button aria-label="Notifications">
                <Svg size={18} stroke="#fff" sw={1.3}><path d="M1.5 2.5 H16.5 V14 H12 L9 17 V14 H1.5 Z" /></Svg>
            </button>
            <ShowDesktop aria-label="Show desktop" />
        </Tray>
    </TaskBar>
);

class App extends React.Component {
    render() {
        return (
            <Page>
                <GlobalStyle />
                <BrowserChrome />
                <Application>
                    <Sidebar>
                        <Burger aria-label="Menu">
                            <Svg size={32} stroke={side} sw={3}><path d="M6 9 H26 M6 16 H26 M6 23 H26" /></Svg>
                        </Burger>
                        <SideMenu>
                            {sideIcons.map(icon => (
                                <SideItem key={icon.name}>
                                    <button aria-label={icon.name}><Svg size={32} stroke={side}>{icon.art}</Svg></button>
                                </SideItem>
                            ))}
                        </SideMenu>
                    </Sidebar>
                    <Main>
                        <Header />
                        <Breadcrumb>
                            {["Supervisor", "System Setup", "Users"].map(name => (
                                <Crumb key={name}>
                                    <a href="#">{name}</a>
                                    <Svg w={9} h={28}>
                                        <path d="M0 0 L9 14 L0 28 Z" fill="#ebeff0" />
                                        <path d="M0 0 L8.5 14 L0 28" stroke="#c9d3d8" strokeWidth="1" />
                                    </Svg>
                                </Crumb>
                            ))}
                        </Breadcrumb>
                        <GridToolbar>
                            <ToolButton>
                                <Svg size={20} stroke="#3598dc" sw={1.6}>
                                    <path d="M9 2 H2 V19 H18 V12" />
                                    <path d="M13 2 L19 7 L13 12 V9 Q9 9 8 13 Q7.5 5.5 13 5 Z" fill="#3598dc" stroke="none" />
                                </Svg>
                                Export
                            </ToolButton>
                            <ToolButton aria-label="Refresh">
                                <Svg size={20} stroke="#3598dc" sw={1.7}>
                                    <path d="M3.5 6 A8 8 0 1 1 2.5 12" />
                                    <path d="M.5 4 H7 L5 9.5 Z" fill="#3598dc" stroke="none" />
                                </Svg>
                            </ToolButton>
                            <ToolButton>
                                <Svg size={20} stroke="#3598dc" sw={1.6}>
                                    <path d="M2.5 3 H17.5 M7 2 H13" strokeWidth="2" />
                                    <path d="M4.5 5.5 H15.5 V19 H4.5 Z" stroke="#68b2e5" />
                                </Svg>
                                Clear UI state
                            </ToolButton>
                            <GridSearch>
                                <input type="text" aria-label="Search users" placeholder="Search..." />
                                <button type="button" aria-label="Search"><Magnifier size={18} color="#3598dc" /></button>
                            </GridSearch>
                            <ColumnChooser>
                                <button aria-label="Choose columns">
                                    <Svg size={16}><path d="M0 2 H7 V5 H0 Z M9 2 H16 V5 H9 Z M0 7 H7 V8 H0 Z M9 7 H16 V8 H9 Z M0 10 H7 V11 H0 Z M9 10 H16 V11 H9 Z M0 13 H7 V14 H0 Z M9 13 H16 V14 H9 Z" fill="#3598dc" /></Svg>
                                </button>
                            </ColumnChooser>
                        </GridToolbar>
                        <Grid>
                            <GridBody>
                                <TableArea><UserTable /></TableArea>
                                <ScrollTrack>
                                    <Svg w={16} h={6}><path d="M5 5 L8.5 1 L12 5 Z" fill="#a3a3a3" /></Svg>
                                    <Svg w={16} h={6}><path d="M5 1 L8.5 5 L12 1 Z" fill="#a3a3a3" /></Svg>
                                </ScrollTrack>
                            </GridBody>
                            <GridPager />
                        </Grid>
                    </Main>
                </Application>
                <WindowsBar />
                <ContextMenu>
                    {menuItems.map((item, i) => (
                        <li key={item.title}>
                            <MenuButton $active={i === 0}>{item.icon}{item.title}</MenuButton>
                        </li>
                    ))}
                </ContextMenu>
            </Page>
        );
    }
}

export default App;
